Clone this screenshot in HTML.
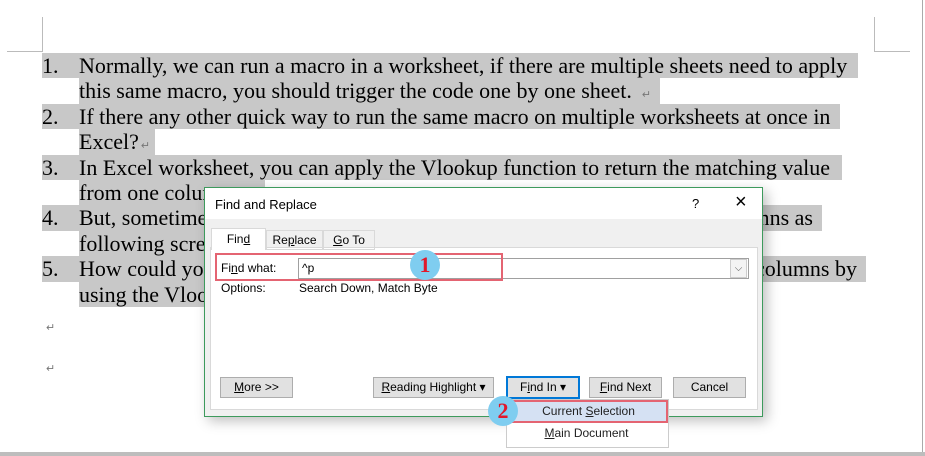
<!DOCTYPE html>
<html><head><meta charset="utf-8"><style>
body{margin:0;width:925px;height:456px;background:#fff;position:relative;overflow:hidden;font-family:"Liberation Sans",sans-serif}
.l{position:absolute;height:25.4px;background:#c8c8c8;font:22px/25px "Liberation Serif",serif;color:#000;white-space:nowrap;overflow:hidden}
.n{position:absolute;left:0}
.t{position:absolute;left:37px}
.rt{position:absolute;right:9px}
.rm{font-size:11px;color:#777;margin-left:10px}
.pm{position:absolute;font-size:11px;color:#777}
.dlg{position:absolute;left:204px;top:187px;width:557px;height:228px;border:1px solid #3d9a5c;background:#f0f0f0;box-shadow:4px 4px 12px rgba(0,0,0,.25);font-size:12px;color:#000}
.btn{position:absolute;top:189px;height:19px;border:1px solid #adadad;background:#e1e1e1;text-align:center;line-height:19px;font-size:12px}
u{text-decoration:underline}
.c{position:absolute;width:30px;height:30px;border-radius:50%;background:#7fcdf0;color:#e0182b;font:bold 22px/30px "Liberation Serif",serif;text-align:center}
</style></head><body>
<div style="position:absolute;left:42px;top:17px;width:1px;height:35px;background:#bbb"></div>
<div style="position:absolute;left:7px;top:51px;width:36px;height:1px;background:#bbb"></div>
<div style="position:absolute;left:874px;top:17px;width:1px;height:35px;background:#bbb"></div>
<div style="position:absolute;left:874px;top:51px;width:36px;height:1px;background:#bbb"></div>
<div style="position:absolute;left:922px;top:0;width:1px;height:456px;background:#aaa"></div>
<div style="position:absolute;left:0;top:452px;width:925px;height:4px;background:#bdbdbd"></div>

<div class="l" style="left:42px;top:53px;width:816px"><span class="n">1.</span><span class="t">Normally, we can run a macro in a worksheet, if there are multiple sheets need to apply</span></div>
<div class="l" style="left:79px;top:78.4px;width:581px"><span style="position:absolute;left:0">this same macro, you should trigger the code one by one sheet.<span class="rm">↵</span></span></div>
<div class="l" style="left:42px;top:103.8px;width:798px"><span class="n">2.</span><span class="t">If there any other quick way to run the same macro on multiple worksheets at once in</span></div>
<div class="l" style="left:79px;top:129.2px;width:76px"><span style="position:absolute;left:0">Excel?<span class="rm" style="margin-left:2px">↵</span></span></div>
<div class="l" style="left:42px;top:154.6px;width:800px"><span class="n">3.</span><span class="t">In Excel worksheet, you can apply the Vlookup function to return the matching value</span></div>
<div class="l" style="left:79px;top:180px;width:186px"><span style="position:absolute;left:0">from one column to another</span></div>
<div class="l" style="left:42px;top:205.4px;width:780px"><span class="n">4.</span><span class="t">But, sometimes, you need to vlookup</span><span class="rt">and return multiple columns as</span></div>
<div class="l" style="left:79px;top:230.8px;width:300px"><span style="position:absolute;left:0">following screenshot shown.</span></div>
<div class="l" style="left:42px;top:256.2px;width:824px"><span class="n">5.</span><span class="t">How could you return</span><span class="rt">the matching values from multiple columns by</span></div>
<div class="l" style="left:79px;top:281.6px;width:300px"><span style="position:absolute;left:0">using the Vlookup function?</span></div>
<div class="pm" style="left:46px;top:321px">↵</div>
<div class="pm" style="left:46px;top:362px">↵</div>

<div class="dlg">
<div style="position:absolute;left:0;top:0;width:557px;height:31px;background:#fff"></div>
<div style="position:absolute;left:10px;top:9px;font-size:13px">Find and Replace</div>
<div style="position:absolute;left:487px;top:8px;font-size:13px">?</div>
<div style="position:absolute;left:530px;top:3px;font-size:20px;font-weight:300">×</div>
<div style="position:absolute;left:5px;top:59px;width:546px;height:161px;background:#fff;border:1px solid #d9d9d9"></div>
<div style="position:absolute;left:6px;top:40px;width:53px;height:21px;background:#fff;border:1px solid #d9d9d9;border-bottom:none;text-align:center;line-height:21px">Fin<u>d</u></div>
<div style="position:absolute;left:61px;top:42px;width:55px;height:18px;border:1px solid #d9d9d9;text-align:center;line-height:18px">Re<u>p</u>lace</div>
<div style="position:absolute;left:118px;top:42px;width:50px;height:18px;border:1px solid #d9d9d9;text-align:center;line-height:18px"><u>G</u>o To</div>
<div style="position:absolute;left:16px;top:73px">Fi<u>n</u>d what:</div>
<div style="position:absolute;left:93px;top:70px;width:449px;height:19px;border:1px solid #a0a0a0;background:#fff"></div>
<div style="position:absolute;left:525px;top:71px;width:15px;height:17px;border:1px solid #ccc;background:#f3f3f3;font-size:10px;text-align:center;line-height:17px;color:#555">⌵</div>
<div style="position:absolute;left:97px;top:73px">^p</div>
<div style="position:absolute;left:10px;top:65px;width:284px;height:24px;border:2px solid #e46472"></div>
<div style="position:absolute;left:16px;top:93px">Options:</div>
<div style="position:absolute;left:94px;top:93px">Search Down, Match Byte</div>
<div class="btn" style="left:15px;width:71px"><u>M</u>ore &gt;&gt;</div>
<div class="btn" style="left:168px;width:119px"><u>R</u>eading Highlight ▾</div>
<div class="btn" style="left:301px;width:70px;border:2px solid #0078d7;top:188px">F<u>i</u>nd In ▾</div>
<div class="btn" style="left:384px;width:71px"><u>F</u>ind Next</div>
<div class="btn" style="left:468px;width:71px">Cancel</div>
</div>
<div class="c" style="left:410px;top:250px">1</div>
<div style="position:absolute;left:506px;top:399px;width:161px;height:47px;border:1px solid #ccc;background:#fff;font-size:12px"></div>
<div style="position:absolute;left:509px;top:400px;width:155px;height:19px;background:#d5e1f3;border:2px solid #e46472;text-align:center;line-height:19px;font-size:12px;color:#222">Current <u>S</u>election</div>
<div style="position:absolute;left:506px;top:426px;width:161px;text-align:center;font-size:12px;color:#222"><u>M</u>ain Document</div>
<div class="c" style="left:488px;top:396px">2</div>
</body></html>
